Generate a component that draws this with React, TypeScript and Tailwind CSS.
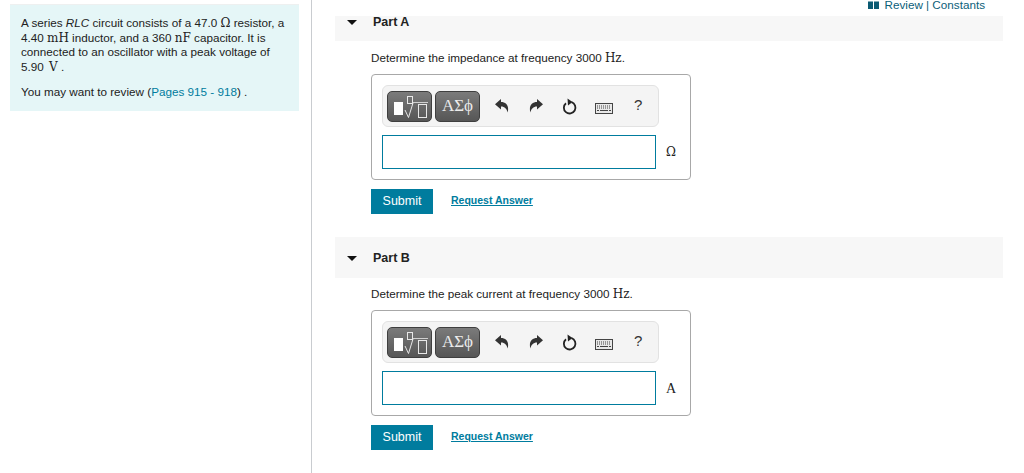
import React from "react";
const sans = "font-['Liberation_Sans',Arial,sans-serif]";
const M = ({ children }: { children: React.ReactNode }) => (
  <span className="font-['DejaVu_Serif',serif] text-[12px] leading-[12px]">{children}</span>
);

function Undo({ flip }: { flip?: boolean }) {
  return (
    <svg width="14" height="14" viewBox="0 0 14 14" style={flip ? { transform: "scaleX(-1)" } : undefined}>
      <path d="M0 5.2 L6 0 V3 C11 3 14.5 6.5 12.6 13.5 C11.8 10 9.8 7.6 6 7.6 V10.6 Z" fill="#333" />
    </svg>
  );
}

function Toolbar() {
  return (
    <div className="flex h-[42px] w-[277px] items-center rounded-[6px] border border-[#e2e2e2] bg-[#f4f4f4] pl-[4px]">
      <div className="flex h-[31px] w-[45px] items-center rounded-[5px] border border-[#3f3f3f] bg-gradient-to-b from-[#7b7b7b] to-[#565656] pl-[6px]">
        <div className="mt-[4px] h-[13px] w-[9px] bg-white" />
        <svg width="27" height="26" viewBox="0 0 27 26">
          <g fill="none" stroke="#e8e8e8" strokeWidth="1">
            <rect x="4.5" y="3.5" width="5" height="7" />
            <path d="M2 17 L5.5 24.5 L10 10" />
            <path d="M10 9.5 H25" opacity="0.8" />
            <rect x="15.5" y="11.5" width="8" height="13" />
          </g>
        </svg>
      </div>
      <div className="ml-[3px] flex h-[31px] w-[45px] items-center justify-center rounded-[5px] border border-[#3f3f3f] bg-gradient-to-b from-[#7b7b7b] to-[#565656] font-['Liberation_Serif',serif] text-[17px] text-[#ececec]">
        ΑΣϕ
      </div>
      <div className="ml-[15px] flex w-[14px] justify-center"><Undo /></div>
      <div className="ml-[20px] flex w-[14px] justify-center"><Undo flip /></div>
      <svg width="16" height="17" viewBox="0 0 16 17" className="ml-[19px]">
        <path d="M9.5 4.2 A5.8 5.8 0 1 1 4 5.2" fill="none" stroke="#222" strokeWidth="1.8" />
        <path d="M5.5 0.5 L10.5 4 L6 7.5 Z" fill="#222" />
      </svg>
      <svg width="18" height="11" viewBox="0 0 18 11" className="ml-[17px] mt-[4px]">
        <rect x="0.5" y="0.5" width="17" height="10" fill="#e8e8e8" stroke="#444" />
        <path d="M2 3 H16 M2 5 H16" stroke="#444" strokeWidth="1" strokeDasharray="1 1" />
        <path d="M2 7.5 H4 M5 7.5 H13 M14 7.5 H16" stroke="#444" strokeWidth="1.2" />
      </svg>
      <span className={`ml-[21px] mt-[-3px] text-[15px] leading-none text-[#333] ${sans}`}>?</span>
    </div>
  );
}

function Part({ name, prompt, unit, unitClass, clipped }: { name: string; prompt: string; unit: string; unitClass: string; clipped?: boolean }) {
  return (
    <section>
      <div className={`flex w-[668px] items-center bg-[#f7f7f7] ${clipped ? "h-[25px] pb-[12px]" : "h-[41px] pt-[1px]"}`}>
        <div className={`ml-[12px] h-0 w-0 border-x-[5px] border-t-[5px] border-x-transparent border-t-[#111] ${clipped ? "mt-[-1px]" : ""}`} />
        <span className="ml-[16px] text-[12.5px] font-bold text-[#222]">{name}</span>
      </div>
      <p className={`ml-[36px] h-[16px] text-[11.7px] leading-[16px] text-[#222] ${clipped ? "mt-[9px]" : "mt-[8px]"}`}>
        {prompt} <M>Hz</M>.
      </p>
      <div className="ml-[36px] mt-[8px] h-[106px] w-[320px] rounded-[4px] border border-[#a8a8a8] bg-white pl-[10px] pt-[10px]">
        <Toolbar />
        <div className="mt-[8px] flex items-center">
          <div className="h-[34px] w-[274px] border border-[#007c9e] bg-white" />
          <span className={`ml-[9px] w-[12px] text-center text-[#222] ${unitClass}`}>{unit}</span>
        </div>
      </div>
      <div className="ml-[36px] mt-[9px] flex items-center">
        <button className="h-[25px] w-[62px] bg-[#007c9e] text-[12.5px] text-white">Submit</button>
        <a className="ml-[18px] mt-[-2px] text-[10.5px] font-bold text-[#007c9e] underline">Request Answer</a>
      </div>
    </section>
  );
}

export default function App() {
  return (
    <div className={`flex h-[473px] w-[1024px] overflow-hidden bg-white text-[#222] ${sans}`}>
      <aside className="h-full w-[312px] shrink-0 border-r border-[#c9ccd0] pl-[10px] pt-[4px]">
        <div className="h-[107px] w-[289px] border-t border-[#eef0f0] bg-[#e5f6f7] pl-[11px] pt-[11px] text-[11.7px] leading-[14.5px] text-[#222]">
          <p className="whitespace-nowrap">
            A series <i>RLC</i> circuit consists of a 47.0 <M>Ω</M> resistor, a
            <br />
            4.40 <M>mH</M> inductor, and a 360 <M>nF</M> capacitor. It is
            <br />
            connected to an oscillator with a peak voltage of
            <br />
            5.90 <span className="ml-[2px]"><M>V</M></span> .
          </p>
          <p className="mt-[11px] whitespace-nowrap">
            You may want to review (<span className="text-[#007c9e]">Pages 915 - 918</span>) .
          </p>
        </div>
      </aside>
      <main className="relative min-w-0 flex-1 pl-[23px] pt-[16px]">
        <div className="absolute right-[39px] top-0 flex items-center text-[11.7px] leading-[10px] text-[#0b6079]">
          <svg width="11" height="8" viewBox="0 0 11 8" className="mr-[6px]">
            <path d="M0 0.5 H5 V8 H0 Z M6 0.5 H11 V8 H6 Z" fill="#0b5a73" />
          </svg>
          Review | Constants
        </div>
        <div className="flex flex-col gap-[23px]">
          <Part clipped name="Part A" prompt="Determine the impedance at frequency 3000" unit="Ω" unitClass="font-['DejaVu_Serif',serif] text-[12px]" />
          <Part name="Part B" prompt="Determine the peak current at frequency 3000" unit="A" unitClass="font-['Liberation_Serif',serif] text-[14px]" />
        </div>
      </main>
    </div>
  );
}
